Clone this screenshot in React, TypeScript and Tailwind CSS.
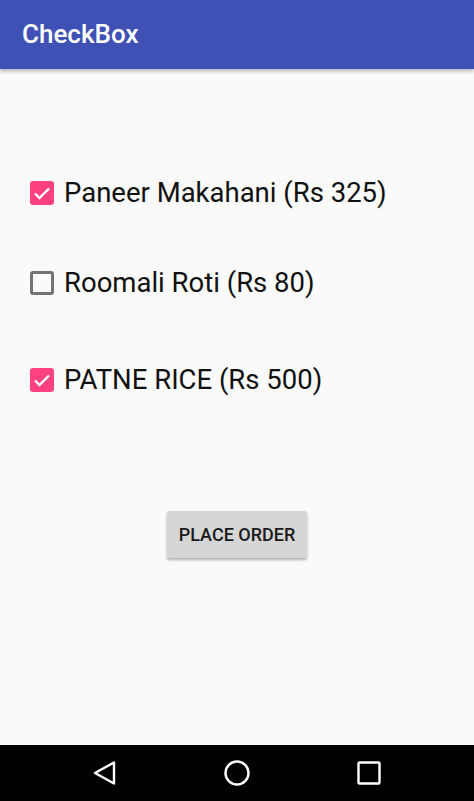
import React, { useState } from 'react'

type Item = { label: string; checked: boolean }

const initial: Item[] = [
  { label: 'Paneer Makahani (Rs 325)', checked: true },
  { label: 'Roomali Roti (Rs 80)', checked: false },
  { label: 'PATNE RICE (Rs 500)', checked: true },
]

const Box = ({ checked }: { checked: boolean }) =>
  checked ? (
    <span className="flex h-[24px] w-[24px] items-center justify-center rounded-[3px] bg-[#ff4081]">
      <svg width="24" height="24" viewBox="0 0 24 24" fill="none">
        <path d="M5 12.5l4.5 4.5L19 7.5" stroke="white" strokeWidth="2.4" />
      </svg>
    </span>
  ) : (
    <span className="block h-[24px] w-[24px] rounded-[3px] border-[3px] border-[#737373]" />
  )

export default function App() {
  const [items, setItems] = useState(initial)

  const toggle = (i: number) =>
    setItems(items.map((it, idx) => (idx === i ? { ...it, checked: !it.checked } : it)))

  return (
    <div className="flex h-[801px] w-[474px] flex-col bg-[#fafafa] font-['Roboto',sans-serif]">
      {/* App bar */}
      <div className="flex h-[69px] items-center bg-[#3f51b5] px-[22px] shadow-[0_2px_4px_rgba(0,0,0,0.3)]">
        <h1 className="text-[26px] font-medium text-white">CheckBox</h1>
      </div>

      {/* Content */}
      <div className="flex flex-1 flex-col px-[30px] pt-[111px]">
        {items.map((it, i) => (
          <button
            key={it.label}
            onClick={() => toggle(i)}
            className={`flex h-[26px] items-center gap-[10px] text-left ${i === 0 ? '' : i === 1 ? 'mt-[64px]' : 'mt-[71px]'}`}
          >
            <Box checked={it.checked} />
            <span className="text-[27.5px] leading-none text-[#111]">{it.label}</span>
          </button>
        ))}

        <div className="mt-[118px] flex justify-center">
          <button className="h-[47px] w-[140px] rounded-[2px] bg-[#d6d6d6] text-[18px] font-medium text-[#1a1a1a] shadow-[0_2px_3px_rgba(0,0,0,0.3)]">
            PLACE ORDER
          </button>
        </div>
      </div>

      {/* Navigation bar */}
      <div className="flex h-[56px] items-center justify-center gap-[106px] bg-black">
        <svg width="26" height="26" viewBox="0 0 26 26" fill="none">
          <path d="M22 2.5 L3 13 L22 23.5 Z" stroke="white" strokeWidth="2.4" strokeLinejoin="round" />
        </svg>
        <svg width="26" height="26" viewBox="0 0 26 26" fill="none">
          <circle cx="13" cy="13" r="11.5" stroke="white" strokeWidth="2.4" />
        </svg>
        <svg width="26" height="26" viewBox="0 0 26 26" fill="none">
          <rect x="2.5" y="2.5" width="21" height="21" rx="1" stroke="white" strokeWidth="2.4" />
        </svg>
      </div>
    </div>
  )
}
